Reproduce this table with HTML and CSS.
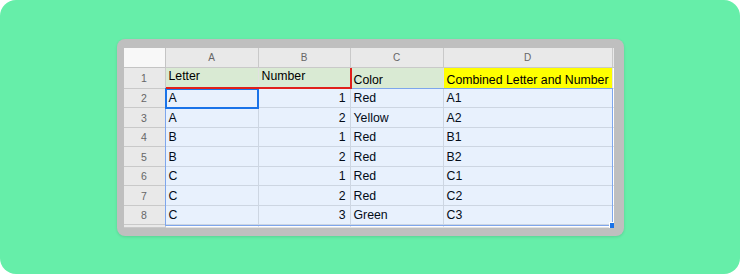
FILE: index.html
```html
<!DOCTYPE html>
<html>
<head>
    <title>Sheet preview</title>
    <link rel="stylesheet" href="styles.css">
</head>
<body>
    <div class="canvas">
        <div class="frame">
            <div class="sheet">
                <!-- column headers -->
                <div class="corner"></div>
                <div class="col-head">A</div>
                <div class="col-head">B</div>
                <div class="col-head">C</div>
                <div class="col-head">D</div>
                <div class="col-head"></div>

                <!-- row 1 -->
                <div class="row-head">1</div>
                <div class="cell title mid">Letter</div>
                <div class="cell title mid">Number</div>
                <div class="cell title">Color</div>
                <div class="cell yellow">Combined Letter and Number</div>
                <div class="cell"></div>

                <div class="row-head">2</div>
                <div class="cell">A</div><div class="cell num">1</div><div class="cell">Red</div><div class="cell">A1</div><div class="cell"></div>
                <div class="row-head">3</div>
                <div class="cell">A</div><div class="cell num">2</div><div class="cell">Yellow</div><div class="cell">A2</div><div class="cell"></div>
                <div class="row-head">4</div>
                <div class="cell">B</div><div class="cell num">1</div><div class="cell">Red</div><div class="cell">B1</div><div class="cell"></div>
                <div class="row-head">5</div>
                <div class="cell">B</div><div class="cell num">2</div><div class="cell">Red</div><div class="cell">B2</div><div class="cell"></div>
                <div class="row-head">6</div>
                <div class="cell">C</div><div class="cell num">1</div><div class="cell">Red</div><div class="cell">C1</div><div class="cell"></div>
                <div class="row-head">7</div>
                <div class="cell">C</div><div class="cell num">2</div><div class="cell">Red</div><div class="cell">C2</div><div class="cell"></div>
                <div class="row-head">8</div>
                <div class="cell">C</div><div class="cell num">3</div><div class="cell">Green</div><div class="cell">C3</div><div class="cell"></div>

                <div class="row-head"></div>
                <div class="cell"></div><div class="cell"></div><div class="cell"></div><div class="cell"></div><div class="cell"></div>

                <!-- selection overlays -->
                <div class="range"><span class="handle"></span></div>
                <div class="active"></div>
                <div class="red-border"></div>
            </div>
        </div>
    </div>
</body>
</html>
```

FILE: styles.css
```css
* { box-sizing: border-box; }
html, body { margin: 0; padding: 0; background: #fff; }
body { font-family: "Liberation Sans", Arial, sans-serif; }

.canvas {
    width: 740px;
    height: 274px;
    background: #66eea9;
    border-radius: 16px;
    display: flex;
    align-items: center;
    justify-content: center;
}

.frame {
    width: 507px;
    height: 197px;
    background: #bfbfbf;
    border-radius: 8px;
    padding: 9px 10px 8px 7px;
    box-shadow: 0 1px 3px rgba(0, 0, 0, 0.12);
}

.sheet {
    position: relative;
    width: 490px;
    height: 180px;
    background: #fff;
    overflow: hidden;
    display: grid;
    grid-template-columns: 42px 93px 92px 93px 169px 1fr;
    grid-template-rows: 20px 21px repeat(7, 19.5px) 1fr;
}

.corner {
    background: #f8f8f8;
    border-right: 1px solid #c4c4c4;
    border-bottom: 1px solid #c4c4c4;
}

.col-head, .row-head {
    background: #e9e9e9;
    color: #666;
    font-size: 10px;
    display: flex;
    align-items: center;
    justify-content: center;
    border-right: 1px solid #c9c9c9;
    border-bottom: 1px solid #c9c9c9;
}
.row-head { font-size: 10.5px; padding-top: 1px; }

.cell {
    display: flex;
    align-items: flex-end;
    padding: 0 4px 2px 3px;
    font-size: 12.3px;
    color: #000;
    white-space: nowrap;
    border-right: 1px solid #e1e1e1;
    border-bottom: 1px solid #e1e1e1;
}
.cell.num { justify-content: flex-end; }
.cell.title { background: #d9ead3; padding-bottom: 1px; }
.cell.mid { align-items: center; padding-bottom: 3px; }
.cell.yellow { background: #ffff00; padding-bottom: 1px; }

/* range A2:D8 */
.range {
    position: absolute;
    left: 41px;
    top: 40px;
    width: 448px;
    height: 138.5px;
    background: rgba(26, 115, 232, 0.1);
    border: 1px solid #7ea6ec;
}
.range .handle {
    position: absolute;
    right: -4px;
    bottom: -4px;
    width: 7px;
    height: 7px;
    background: #1a73e8;
    border: 1px solid #fff;
}

/* active cell A2 */
.active {
    position: absolute;
    left: 41px;
    top: 40px;
    width: 94px;
    height: 21px;
    border: 2px solid #1a73e8;
}

/* red edge on A1:B1 */
.red-border {
    position: absolute;
    left: 42px;
    top: 20px;
    width: 186px;
    height: 21px;
    border-right: 2px solid #e0201b;
    border-bottom: 2px solid #e0201b;
}
```
